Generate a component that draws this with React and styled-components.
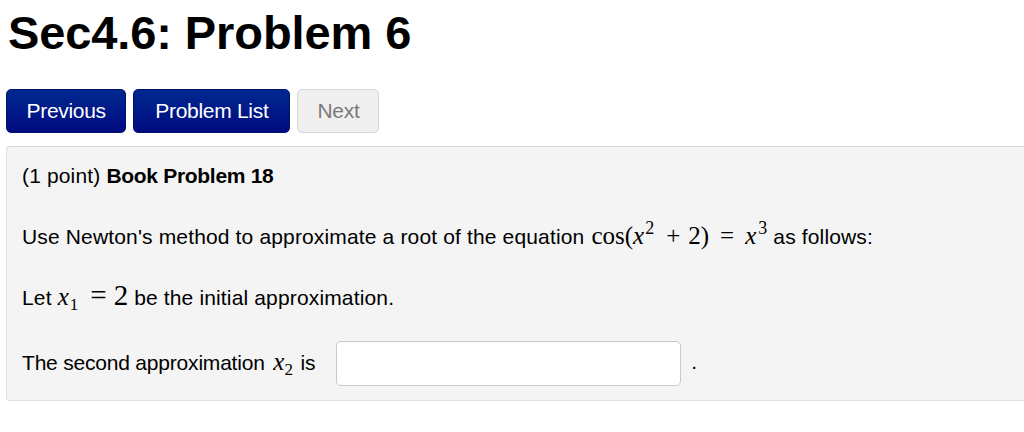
import React from 'react'
import styled, { createGlobalStyle } from 'styled-components'

const GlobalStyle = createGlobalStyle`
  body {
    margin: 0;
    background: #fff;
    font-family: "Liberation Sans", Arial, Helvetica, sans-serif;
    color: #000;
  }
`

const Page = styled.div`
  padding: 0 0 0 6px;
  width: 1040px;
`

const Title = styled.h1`
  margin: 0;
  padding: 6px 0 0 2px;
  font-size: 47px;
  line-height: 54px;
  font-weight: 700;
  letter-spacing: -0.1px;
`

const Nav = styled.div`
  display: flex;
  gap: 7px;
  margin-top: 29px;
`

const NavButton = styled.button`
  height: 44px;
  padding: 0 ${p => p.$pad || 19}px;
  border-radius: 5px;
  font-family: inherit;
  font-size: 21px;
  letter-spacing: -0.3px;
  border: 1px solid ${p => (p.$disabled ? '#d6d6d6' : '#00136e')};
  color: ${p => (p.$disabled ? '#7a7a7a' : '#fff')};
  background: ${p =>
    p.$disabled ? '#efefef' : 'linear-gradient(#00288f, #000a80)'};
`

const Panel = styled.div`
  margin-top: 13px;
  height: 255px;
  box-sizing: border-box;
  background: #f4f4f4;
  border: 1px solid #e2e2e2;
  border-top-color: #dadada;
  border-radius: 3px;
  padding: 17px 15px 0;
  font-size: 21px;
  letter-spacing: 0.15px;
  display: flex;
  flex-direction: column;
  gap: 37px;
`

const Line = styled.div`
  height: 23px;
  line-height: 23px;
  white-space: nowrap;
`

const Strong = styled.b`
  letter-spacing: -0.3px;
`

const Math = styled.span`
  font-family: "Liberation Serif", "Times New Roman", serif;
  font-size: 25px;
  letter-spacing: 0;
  margin: 0 ${p => p.$right ?? 0}px 0 ${p => p.$left ?? 0}px;
`

const Var = styled.i`
  font-family: "Liberation Serif", "Times New Roman", serif;
`

const Op = styled.span`
  margin: 0 ${p => p.$r ?? 6}px 0 ${p => p.$l ?? 6}px;
`

const Big = styled.span`
  font-size: 29px;
`

const Sup = styled.sup`
  font-size: 18px;
  line-height: 0;
  vertical-align: 10px;
  margin-left: ${p => p.$gap ?? 1}px;
`

const Sub = styled.sub`
  font-size: 17px;
  line-height: 0;
  vertical-align: -5px;
  margin-left: ${p => p.$gap ?? 1}px;
`

const AnswerRow = styled.div`
  display: flex;
  align-items: center;
  margin-top: -7px;
  letter-spacing: -0.2px;
`

const Label = styled.span`
  line-height: 23px;
  white-space: nowrap;
`

const Answer = styled.input`
  width: 345px;
  height: 45px;
  box-sizing: border-box;
  margin: 4px 10px 0 21px;
  border: 1px solid #c9c9c9;
  border-radius: 5px;
  background: #fff;
`

const App = () => (
  <Page>
    <GlobalStyle />
    <Title>Sec4.6: Problem 6</Title>
    <Nav>
      <NavButton $pad={19.5}>Previous</NavButton>
      <NavButton $pad={21}>Problem List</NavButton>
      <NavButton $pad={19} $disabled>Next</NavButton>
    </Nav>
    <Panel>
      <Line>
        (1 point) <Strong>Book Problem 18</Strong>
      </Line>
      <Line>
        Use Newton's method to approximate a root of the equation{' '}
        <Math $left={1} $right={0}>
          cos(<Var>x</Var>
          <Sup>2</Sup>
          <Op $l={12} $r={8}>+</Op>2)
          <Op $l={11} $r={11}>=</Op>
          <Var>x</Var>
          <Sup $gap={2}>3</Sup>
        </Math>{' '}
        as follows:
      </Line>
      <Line>
        Let{' '}
        <Math $left={0}>
          <Var>x</Var>
          <Sub>1</Sub>
          <Big>
            <Op $l={12} $r={7}>=</Op>2
          </Big>
        </Math>{' '}
        be the initial approximation.
      </Line>
      <AnswerRow>
        <Label>
          The second approximation{' '}
          <Math $left={3} $right={2}>
            <Var>x</Var>
            <Sub $gap={0}>2</Sub>
          </Math>{' '}
          is
        </Label>
        <Answer type="text" />
        <Label>.</Label>
      </AnswerRow>
    </Panel>
  </Page>
)

export default App
